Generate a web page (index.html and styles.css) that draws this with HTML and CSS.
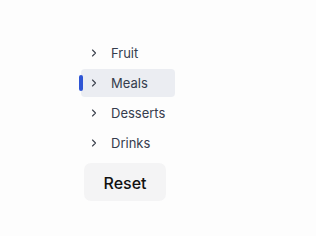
FILE: index.html
```html
<!DOCTYPE html>
<html lang="en">
<head>
	<meta charset="UTF-8">
	<title>Menu</title>
	<link rel="stylesheet" href="styles.css">
</head>
<body>
    <div class="wrap">
        <ul class="menu">
            <li class="item">
                <svg class="chev" viewBox="0 0 8 8" width="8" height="8"><path d="M2.5 1 L5.5 4 L2.5 7" /></svg>
                <span>Fruit</span>
            </li>
            <li class="item active">
                <svg class="chev" viewBox="0 0 8 8" width="8" height="8"><path d="M2.5 1 L5.5 4 L2.5 7" /></svg>
                <span>Meals</span>
            </li>
            <li class="item">
                <svg class="chev" viewBox="0 0 8 8" width="8" height="8"><path d="M2.5 1 L5.5 4 L2.5 7" /></svg>
                <span>Desserts</span>
            </li>
            <li class="item">
                <svg class="chev" viewBox="0 0 8 8" width="8" height="8"><path d="M2.5 1 L5.5 4 L2.5 7" /></svg>
                <span>Drinks</span>
            </li>
        </ul>
        <button class="reset">Reset</button>
    </div>
</body>
</html>
```

FILE: styles.css
```css
*{
    margin: 0;
    padding: 0;
    box-sizing: border-box;
}
html{height: 100%;}
body{
    height: 100%;
    background: #fdfdfd;
    font-family: Inter, "Noto Sans", sans-serif;
}
.wrap{
    padding: 39px 0 0 81px;
}
.menu{
    list-style: none;
    width: 94px;
    display: flex;
    flex-direction: column;
    gap: 2px;
}
.item{
    position: relative;
    height: 28px;
    display: flex;
    align-items: center;
    padding-left: 9px;
    border-radius: 4px;
    font-size: 13px;
    color: #353c4d;
}
.item span{
    margin-left: 13px;
}
.chev{
    fill: none;
    stroke: #3a404c;
    stroke-width: 1.1;
    stroke-linecap: round;
    stroke-linejoin: round;
}
.item.active{
    background: #ebedf2;
}
.item.active::before{
    content: "";
    position: absolute;
    left: -2px;
    top: 6px;
    width: 4px;
    height: 16px;
    border-radius: 2px;
    background: #2f55d4;
}
.reset{
    margin: 6px 0 0 3px;
    width: 82px;
    height: 38px;
    padding-top: 1px;
    border: none;
    border-radius: 7px;
    background: #f4f4f5;
    font-family: Inter, "Noto Sans", sans-serif;
    font-size: 16px;
    font-weight: 500;
    color: #111;
}
```
